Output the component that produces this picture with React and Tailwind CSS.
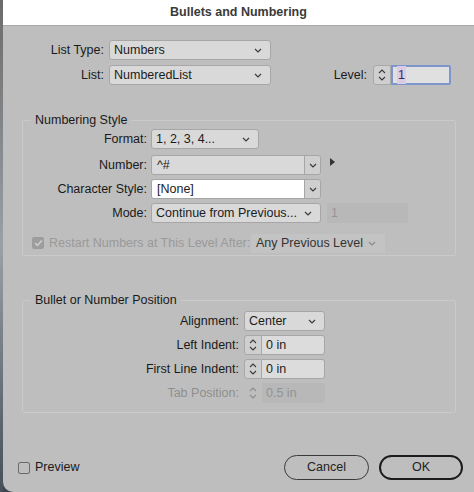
import React from "react";

const font = { fontFamily: '"Liberation Sans", Arial, sans-serif' };

const Chevron = ({ dim = false }) => (
  <svg width="8" height="5" viewBox="0 0 8 5" className="shrink-0">
    <polyline points="1,1 4,4 7,1" fill="none" stroke={dim ? "#8a8a8a" : "#3a3a3a"} strokeWidth="1.2" />
  </svg>
);

const Stepper = ({ dim = false }) => (
  <div className={`w-[18px] h-full flex flex-col items-center justify-center gap-[2px] rounded-l-[3px] ${dim ? "" : "bg-[#cfcfcf] border border-[#a8a8a8]"}`}>
    <svg width="8" height="5" viewBox="0 0 8 5">
      <polyline points="1,4 4,1 7,4" fill="none" stroke={dim ? "#8d8d8d" : "#3a3a3a"} strokeWidth="1.1" />
    </svg>
    <svg width="8" height="5" viewBox="0 0 8 5">
      <polyline points="1,1 4,4 7,1" fill="none" stroke={dim ? "#8d8d8d" : "#3a3a3a"} strokeWidth="1.1" />
    </svg>
  </div>
);

const Select = ({ value, width }) => (
  <div className={`${width} h-[20px] flex items-center justify-between pl-[4px] pr-[8px] bg-[#d9d9d9] border border-[#a6a6a6] rounded-[3px] text-[12.5px] text-[#1c1c1c]`}>
    <span>{value}</span>
    <Chevron />
  </div>
);

const Combo = ({ value, white = false }) => (
  <div className="w-[170px] h-[20px] flex border border-[#a6a6a6] rounded-[3px] overflow-hidden text-[12.5px] text-[#1c1c1c]">
    <div className={`flex-1 flex items-center pl-[5px] ${white ? "bg-white" : "bg-[#d9d9d9]"}`}>{value}</div>
    <div className="w-[16px] flex items-center justify-center bg-[#cfcfcf] border-l border-[#a6a6a6]">
      <Chevron />
    </div>
  </div>
);

const Row = ({ label, labelW, children, dim = false, mt }) => (
  <div className={`flex items-center h-[20px] ${mt}`}>
    <div className={`${labelW} text-right text-[12.5px] ${dim ? "text-[#8f8f8f]" : "text-[#1a1a1a]"}`}>{label}</div>
    {children}
  </div>
);

export default function App() {
  return (
    <div className="w-[474px] h-[492px] flex bg-[#3c4550]" style={font}>
      <div className="w-[3px] h-full bg-gradient-to-b from-[#6b6b6b] via-[#9aa0a6] to-[#46505a]" />
      <div className="flex-1 h-full flex flex-col bg-[#bebebe] rounded-bl-[10px] overflow-hidden">
        {/* title bar */}
        <div className="h-[26px] shrink-0 flex items-center justify-center bg-white border-b border-[#a9a9a9] text-[12.5px] font-bold text-[#3a3a3a]">
          Bullets and Numbering
        </div>

        {/* list type / list */}
        <Row label="List Type:" labelW="w-[101px]" mt="mt-[14px]">
          <div className="ml-[5px]">
            <Select value="Numbers" width="w-[162px]" />
          </div>
        </Row>
        <Row label="List:" labelW="w-[101px]" mt="mt-[5px]">
          <div className="ml-[5px]">
            <Select value="NumberedList" width="w-[162px]" />
          </div>
          <div className="flex-1" />
          <span className="text-[12.5px] text-[#1a1a1a] mr-[6px]">Level:</span>
          <div className="h-[20px] flex mr-[23px]">
            <Stepper />
            <div className="w-[60px] h-full flex items-center pl-[4px] bg-[#e0e0e0] border-2 border-[#7d96cc] rounded-r-[2px] text-[12.5px]">
              <span className="bg-[#dccbe6] text-[#3a2a55] px-[1px]">1</span>
            </div>
          </div>
        </Row>

        {/* numbering style */}
        <fieldset className="mt-[27px] ml-[19px] mr-[18px] border border-[#cacaca] rounded-[2px] pb-[2px]">
          <legend className="ml-[8px] px-[4px] text-[12.5px] leading-4 text-[#1a1a1a]">Numbering Style</legend>
          <Row label="Format:" labelW="w-[124px]" mt="mt-[1px]">
            <div className="ml-[4px]">
              <Select value="1, 2, 3, 4..." width="w-[108px]" />
            </div>
          </Row>
          <Row label="Number:" labelW="w-[124px]" mt="mt-[6px]">
            <div className="ml-[4px]">
              <Combo value="^#" />
            </div>
            <svg width="5" height="8" viewBox="0 0 5 8" className="ml-[9px] -mt-[6px]">
              <polygon points="0,0 5,4 0,8" fill="#333" />
            </svg>
          </Row>
          <Row label="Character Style:" labelW="w-[124px]" mt="mt-[4px]">
            <div className="ml-[4px]">
              <Combo value="[None]" white />
            </div>
          </Row>
          <Row label="Mode:" labelW="w-[124px]" mt="mt-[4px]">
            <div className="ml-[4px]">
              <Select value="Continue from Previous..." width="w-[170px]" />
            </div>
            <div className="ml-[6px] w-[81px] h-[20px] flex items-center pl-[4px] bg-[#b8b8b8] text-[12.5px] text-[#959595]">1</div>
          </Row>
          <div className="flex items-center h-[20px] mt-[10px] ml-[9px]">
            <div className="w-[12px] h-[12px] rounded-[2px] bg-[#9d9d9d] flex items-center justify-center">
              <svg width="9" height="8" viewBox="0 0 9 8">
                <polyline points="1.2,4.2 3.5,6.4 7.8,1.4" fill="none" stroke="#cfcfcf" strokeWidth="1.6" />
              </svg>
            </div>
            <span className="ml-[5px] w-[198px] text-[12.5px] text-[#9a9a9a] whitespace-nowrap">Restart Numbers at This Level After:</span>
            <div className="ml-[4px] w-[134px] h-[19px] flex items-center justify-between pl-[5px] pr-[9px] bg-[#c3c3c3] text-[12.5px] text-[#333]">
              <span>Any Previous Level</span>
              <Chevron dim />
            </div>
          </div>
        </fieldset>

        {/* bullet or number position */}
        <fieldset className="mt-[36px] ml-[19px] mr-[18px] border border-[#cacaca] rounded-[2px] pb-[9px]">
          <legend className="ml-[8px] px-[4px] text-[12.5px] leading-4 text-[#1a1a1a]">Bullet or Number Position</legend>
          <Row label="Alignment:" labelW="w-[216px]" mt="mt-[3px]">
            <div className="ml-[5px]">
              <Select value="Center" width="w-[81px]" />
            </div>
          </Row>
          <Row label="Left Indent:" labelW="w-[216px]" mt="mt-[4px]">
            <div className="ml-[5px] h-[20px] flex">
              <Stepper />
              <div className="w-[63px] h-full flex items-center pl-[4px] bg-[#dcdcdc] border border-l-0 border-[#a6a6a6] rounded-r-[3px] text-[12.5px] text-[#1c1c1c]">0 in</div>
            </div>
          </Row>
          <Row label="First Line Indent:" labelW="w-[216px]" mt="mt-[4px]">
            <div className="ml-[5px] h-[20px] flex">
              <Stepper />
              <div className="w-[63px] h-full flex items-center pl-[4px] bg-[#dcdcdc] border border-l-0 border-[#a6a6a6] rounded-r-[3px] text-[12.5px] text-[#1c1c1c]">0 in</div>
            </div>
          </Row>
          <Row label="Tab Position:" labelW="w-[216px]" mt="mt-[4px]" dim>
            <div className="ml-[5px] h-[20px] flex">
              <Stepper dim />
              <div className="w-[63px] h-full flex items-center pl-[4px] bg-[#b8b8b8] rounded-r-[3px] text-[12.5px] text-[#939393]">0.5 in</div>
            </div>
          </Row>
        </fieldset>

        {/* footer */}
        <div className="mt-[42px] flex items-center h-[25px]">
          <div className="ml-[15px] w-[12px] h-[12px] border border-[#6b6b6b] rounded-[2px]" />
          <span className="ml-[5px] text-[12.5px] text-[#1a1a1a]">Preview</span>
          <div className="flex-1" />
          <button className="w-[85px] h-[25px] rounded-full border border-[#3a3a3a] text-[12.5px] text-[#222]">Cancel</button>
          <button className="ml-[10px] mr-[11px] w-[84px] h-[25px] rounded-full border-2 border-[#1c1c1c] text-[12.5px] text-[#222]">OK</button>
        </div>
      </div>
    </div>
  );
}
